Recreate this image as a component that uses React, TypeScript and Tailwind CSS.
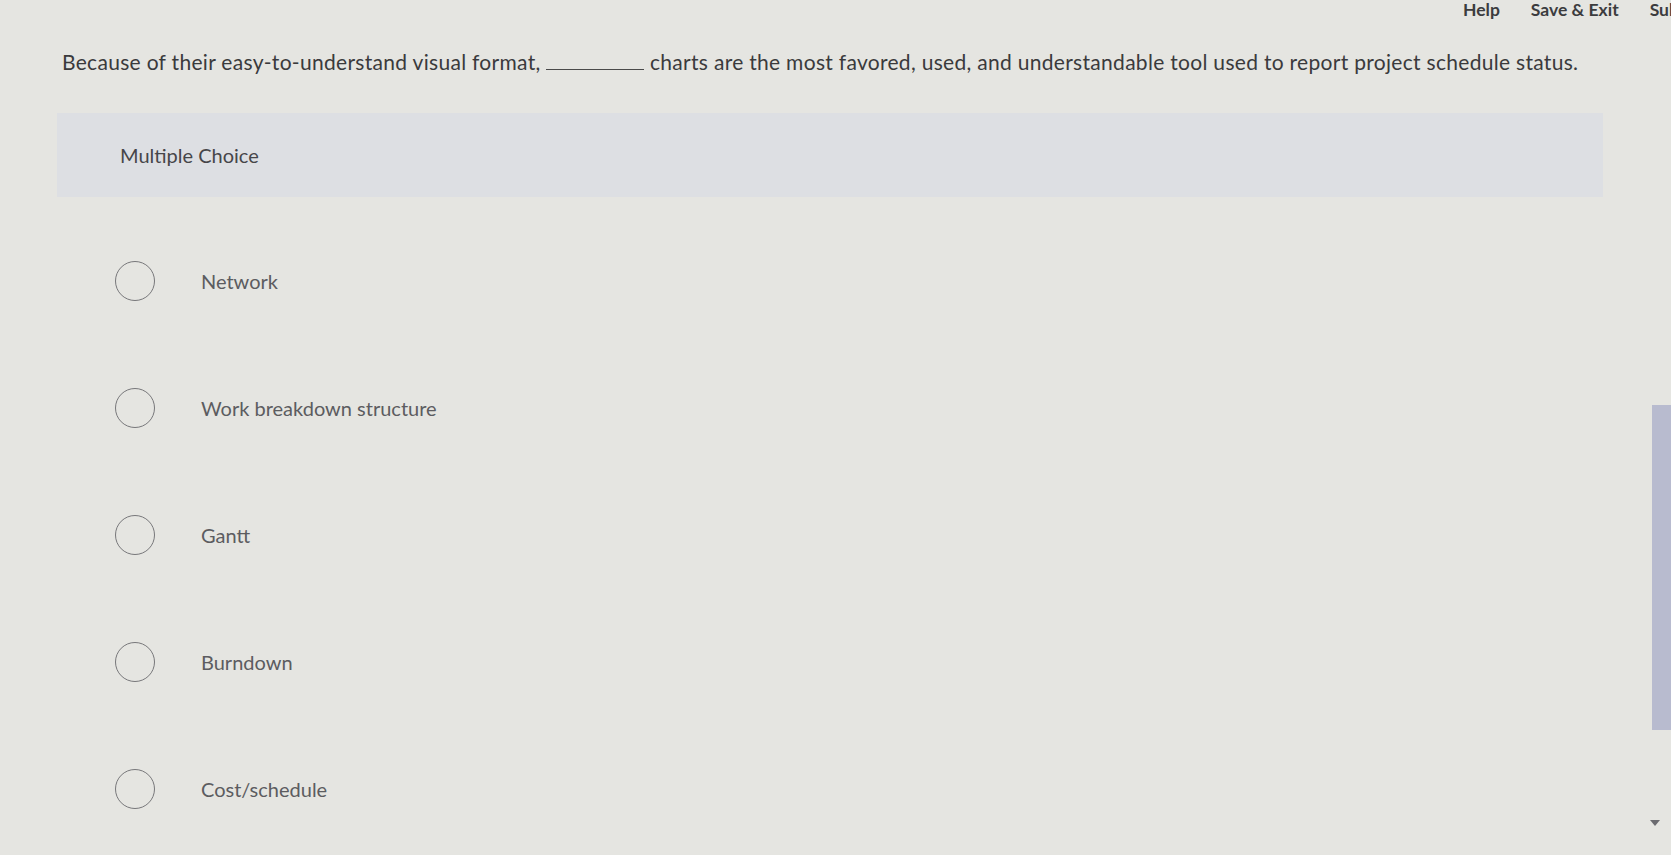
import React from 'react';

const options = ['Network', 'Work breakdown structure', 'Gantt', 'Burndown', 'Cost/schedule'];

const App: React.FC = () => {
  return (
    <div className="relative w-full h-[855px] overflow-hidden bg-[#e5e5e1] font-['Lato','Liberation_Sans',sans-serif]">
      <header className="flex items-center h-[20px] pl-[1463px] gap-[31px] whitespace-nowrap overflow-hidden text-[17.5px] font-bold text-[#3c3c3e] leading-[20px]">
        <span>Help</span>
        <span>Save &amp; Exit</span>
        <span>Submit</span>
      </header>

      <p className="mt-[28px] pl-[62px] text-[21px] tracking-[0.3px] leading-[28px] text-[#3a3a3c] whitespace-nowrap">
        Because of their easy-to-understand visual format,{' '}
        <span className="inline-block w-[98px] border-b border-[#4a4a4a] align-baseline"></span>{' '}
        charts are the most favored, used, and understandable tool used to report project schedule status.
      </p>

      <div className="mt-[37px] ml-[57px] w-[1546px] h-[84px] bg-[#dddfe3] flex items-center pl-[63px]">
        <span className="text-[20px] text-[#464649]">Multiple Choice</span>
      </div>

      <ul className="mt-[20px] flex flex-col">
        {options.map((opt) => (
          <li key={opt} className="h-[127px] flex items-center pl-[115px]">
            <span className="w-[40px] h-[40px] rounded-full border-[1.5px] border-[#77777a] shrink-0"></span>
            <span className="ml-[46px] text-[20px] text-[#5c5c60]">{opt}</span>
          </li>
        ))}
      </ul>

      <div className="absolute right-0 top-[405px] w-[19px] h-[325px] bg-[#b8bbcf]"></div>
      <svg className="absolute left-[1650px] top-[820px]" width="10" height="7" viewBox="0 0 10 7">
        <path d="M0 0 L10 0 L5 6 Z" fill="#6b6b70" />
      </svg>
    </div>
  );
};

export default App;
